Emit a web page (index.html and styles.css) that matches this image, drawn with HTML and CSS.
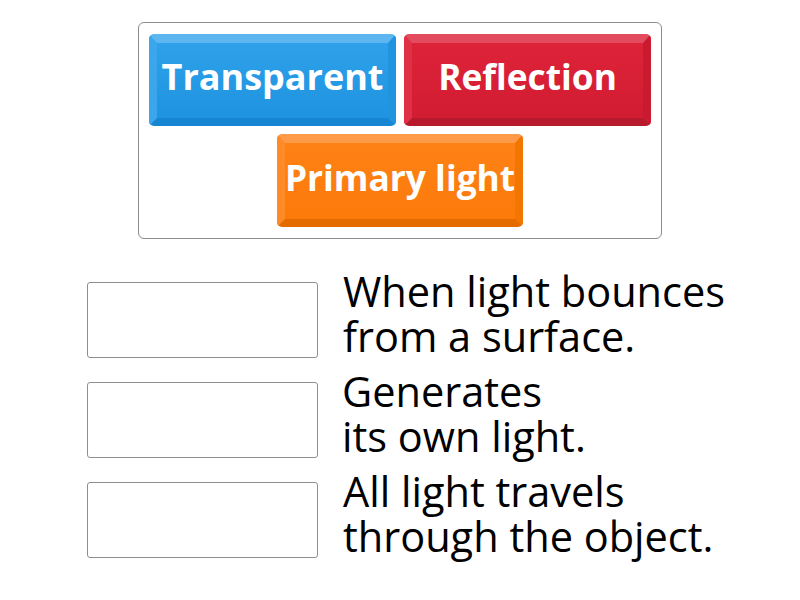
FILE: index.html
```html
<!DOCTYPE html>
<html>
<head>
<meta charset="utf-8">
<link rel="stylesheet" href="styles.css">
</head>
<body>
<div class="page">
  <div class="bank">
    <div class="tile blue">Transparent</div>
    <div class="tile red">Reflection</div>
    <div class="tile orange">Primary light</div>
  </div>
  <div class="rows">
    <div class="row">
      <div class="slot"></div>
      <div class="desc">When light bounces<br>from a surface.</div>
    </div>
    <div class="row">
      <div class="slot"></div>
      <div class="desc shift">Generates<br>its own light.</div>
    </div>
    <div class="row">
      <div class="slot"></div>
      <div class="desc">All light travels<br>through the object.</div>
    </div>
  </div>
</div>
</body>
</html>
```

FILE: styles.css
```css
html, body {
  margin: 0;
  padding: 0;
  background: #ffffff;
}
body {
  font-family: "Open Sans", "Liberation Sans", sans-serif;
  width: 800px;
  height: 600px;
  overflow: hidden;
}
.page {
  padding-top: 22px;
}
.bank {
  margin-left: 138px;
  width: 502px;
  height: 194px;
  border: 1px solid #8c8c8c;
  border-radius: 6px;
  padding: 11px 10px 10px 10px;
  display: flex;
  flex-wrap: wrap;
  justify-content: center;
  align-content: flex-start;
  gap: 8px;
}
.tile {
  box-sizing: border-box;
  width: 247px;
  height: 92px;
  border-radius: 5px;
  border-style: solid;
  border-width: 9px 8px 8px 8px;
  padding-bottom: 9px;
  color: #ffffff;
  font-weight: 700;
  font-size: 36px;
  display: flex;
  align-items: center;
  justify-content: center;
  white-space: nowrap;
}
.blue {
  background: linear-gradient(#2fa1ea, #1f93e0);
  border-color: #5db6ef #2194e0 #1786d2 #3aa6ec;
}
.red {
  font-size: 35.3px;
  background: linear-gradient(#de2339, #d11c31);
  border-color: #e34c5e #c91b30 #b71a2c #df3046;
}
.orange {
  width: 246px;
  height: 93px;
  font-size: 35.3px;
  background: linear-gradient(#ff8216, #fb7a0a);
  border-color: #ff9b48 #f27600 #e36b00 #ff8a26;
}
.rows {
  margin-top: 43px;
  display: flex;
  flex-direction: column;
  gap: 24px;
}
.row {
  display: flex;
  align-items: center;
  margin-left: 87px;
  gap: 25px;
  height: 76px;
}
.slot {
  box-sizing: border-box;
  width: 231px;
  height: 76px;
  border: 1px solid #8f8f8f;
  border-radius: 3px;
  flex: none;
}
.desc {
  font-size: 41.5px;
  line-height: 45px;
  color: #000000;
  margin-top: -12px;
  white-space: nowrap;
}
.shift {
  margin-left: -1px;
}
```
